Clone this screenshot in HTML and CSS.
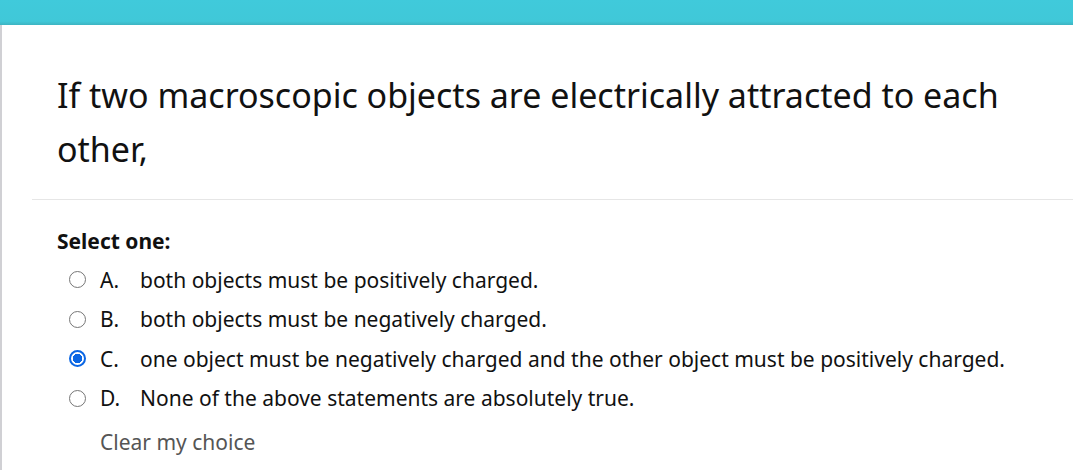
FILE: index.html
```html
<!DOCTYPE html>
<html lang="en">
<head>
    <meta charset="UTF-8">
    <title>Question</title>
    <link rel="stylesheet" href="styles.css">
</head>
<body>
    <div class="topbar"></div>
    <div class="page">
        <div class="question">
            <h2 class="qtext">If two macroscopic objects are electrically attracted to each other,</h2>
        </div>
        <div class="answers">
            <div class="prompt">Select one:</div>
            <label class="option">
                <input type="radio" name="q1">
                <span class="letter">A.</span>
                <span class="text">both objects must be positively charged.</span>
            </label>
            <label class="option">
                <input type="radio" name="q1">
                <span class="letter">B.</span>
                <span class="text">both objects must be negatively charged.</span>
            </label>
            <label class="option">
                <input type="radio" name="q1" checked>
                <span class="letter">C.</span>
                <span class="text">one object must be negatively charged and the other object must be positively charged.</span>
            </label>
            <label class="option">
                <input type="radio" name="q1">
                <span class="letter">D.</span>
                <span class="text">None of the above statements are absolutely true.</span>
            </label>
            <a class="clear" href="#">Clear my choice</a>
        </div>
    </div>
</body>
</html>
```

FILE: styles.css
```css
* {
    margin: 0;
    padding: 0;
    box-sizing: border-box;
}

body {
    font-family: "Noto Sans", sans-serif;
    background: #fff;
    color: #111;
    overflow: hidden;
}

.topbar {
    height: 25px;
    background: linear-gradient(180deg, #40cadb 0%, #40c8d8 85%, #3db4c2 100%);
}

.page {
    border-left: 2px solid #d0d0d4;
    min-height: 445px;
}

.question {
    margin-left: 30px;
    padding: 43px 0 23px 25px;
    border-bottom: 1px solid #e6e6e6;
}

.qtext {
    font-weight: normal;
    font-size: 34px;
    line-height: 54px;
    color: #111;
    max-width: 980px;
}

.answers {
    padding: 29px 0 0 55px;
}

.prompt {
    font-weight: bold;
    font-size: 21px;
    line-height: 24px;
    margin-bottom: 7px;
}

.option {
    display: flex;
    align-items: center;
    height: 39.5px;
    font-size: 21px;
    padding-left: 12px;
}

.option input {
    appearance: none;
    -webkit-appearance: none;
    display: block;
    flex: none;
    width: 17px;
    height: 17px;
    margin: 0 14px 0 0;
    border: 1.5px solid #767676;
    border-radius: 50%;
    background: #fff;
}

.option input:checked {
    border: 2px solid #0b66e4;
    background: radial-gradient(circle, #0b66e4 0 4.5px, #fff 5px);
}

.letter {
    width: 40px;
}

.clear {
    display: inline-block;
    margin: 10px 0 0 43px;
    font-size: 21px;
    line-height: 28px;
    color: #555;
    text-decoration: none;
}
```
